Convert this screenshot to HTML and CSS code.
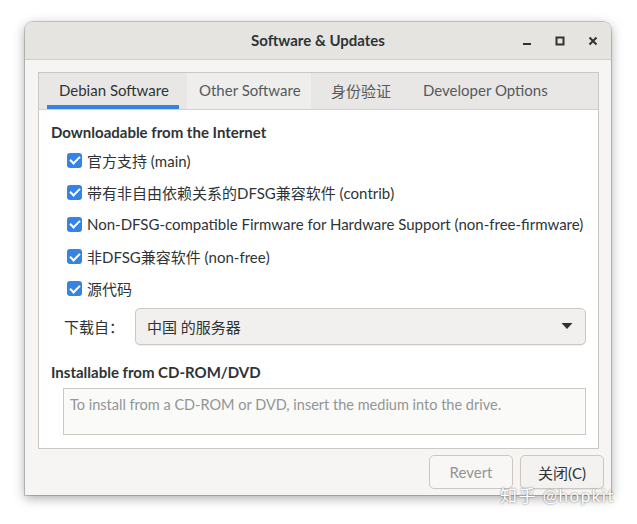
FILE: index.html
```html
<!DOCTYPE html>
<html lang="zh-CN">
<head>
    <meta charset="UTF-8">
    <title>Software &amp; Updates</title>
    <link rel="stylesheet" href="styles.css">
</head>
<body>
    <div class="window">
        <div class="titlebar">
            <span class="title">Software &amp; Updates</span>
            <div class="wm-buttons">
                <span class="wm-btn">
                    <svg width="10" height="10" viewBox="0 0 10 10"><rect x="1" y="7" width="8" height="2" fill="#2e3436"/></svg>
                </span>
                <span class="wm-btn">
                    <svg width="10" height="10" viewBox="0 0 10 10"><rect x="1.5" y="1.5" width="7" height="7" fill="none" stroke="#2e3436" stroke-width="2"/></svg>
                </span>
                <span class="wm-btn">
                    <svg width="10" height="10" viewBox="0 0 10 10"><path d="M1.5 1.5 L8.5 8.5 M8.5 1.5 L1.5 8.5" stroke="#2e3436" stroke-width="2"/></svg>
                </span>
            </div>
        </div>
        <div class="content">
            <div class="notebook">
                <div class="tabs">
                    <span class="tab active">Debian Software</span>
                    <span class="tab hover">Other Software</span>
                    <span class="tab">身份验证</span>
                    <span class="tab">Developer Options</span>
                </div>
                <div class="page">
                    <div class="heading">Downloadable from the Internet</div>
                    <div class="checks">
                        <div class="check"><span class="box"></span>官方支持 (main)</div>
                        <div class="check"><span class="box"></span>带有非自由依赖关系的DFSG兼容软件 (contrib)</div>
                        <div class="check"><span class="box"></span>Non-DFSG-compatible Firmware for Hardware Support (non-free-firmware)</div>
                        <div class="check"><span class="box"></span>非DFSG兼容软件 (non-free)</div>
                        <div class="check"><span class="box"></span>源代码</div>
                    </div>
                    <div class="source-row">
                        <span class="source-label">下载自：</span>
                        <div class="combo">
                            <span>中国 的服务器</span>
                            <svg width="12" height="8" viewBox="0 0 12 8"><path d="M0.5 1 L11.5 1 L6 7 Z" fill="#2e3436"/></svg>
                        </div>
                    </div>
                    <div class="heading cd">Installable from CD-ROM/DVD</div>
                    <div class="cd-box">To install from a CD-ROM or DVD, insert the medium into the drive.</div>
                </div>
            </div>
            <div class="actions">
                <button class="btn" disabled>Revert</button>
                <button class="btn">关闭(C)</button>
            </div>
        </div>
    </div>
    <div class="watermark">知乎 @hopkit</div>
</body>
</html>
```

FILE: styles.css
```css
body {
    margin: 0;
    background-color: #ffffff;
    font-family: 'Lato', 'Noto Sans CJK SC', sans-serif;
    font-size: 15px;
    color: #2e3436;
    width: 637px;
    height: 524px;
    overflow: hidden;
    position: relative;
}
.window {
    position: absolute;
    left: 25px;
    top: 22px;
    width: 586px;
    height: 473px;
    border-radius: 8px 8px 0 0;
    box-shadow: 0 3px 12px rgba(0, 0, 0, 0.35), 0 0 0 1px rgba(0, 0, 0, 0.18);
    display: flex;
    flex-direction: column;
    overflow: hidden;
    background-color: #f6f5f4;
}
.titlebar {
    height: 37px;
    flex: none;
    background-color: #e6e4e1;
    border-bottom: 1px solid #d1cdc8;
    display: flex;
    align-items: center;
    justify-content: center;
    position: relative;
}
.title {
    font-weight: bold;
    color: #2e3436;
    margin-bottom: 2px;
}
.wm-buttons {
    position: absolute;
    right: 8px;
    top: 0;
    height: 37px;
    display: flex;
    align-items: center;
    gap: 13px;
}
.wm-btn {
    width: 20px;
    height: 20px;
    display: flex;
    align-items: center;
    justify-content: center;
}
.content {
    flex: 1;
    padding: 12px 12px 6px 13px;
    display: flex;
    flex-direction: column;
}
.notebook {
    border: 1px solid #cdc7c2;
    background-color: #ffffff;
    height: 375px;
    display: flex;
    flex-direction: column;
}
.tabs {
    height: 36px;
    background-color: #e8e7e6;
    border-bottom: 1px solid #d5d0cc;
    display: flex;
    padding-left: 8px;
    gap: 8px;
}
.tab {
    padding: 0 12px;
    display: flex;
    align-items: center;
    color: #555a5c;
    white-space: nowrap;
    border-bottom: 4px solid transparent;
    padding-top: 2px;
    box-sizing: border-box;
}
.tab.active {
    color: #2e3436;
    border-bottom-color: #3584e4;
    width: 132px;
}
.tab.hover {
    background-color: #eeeeec;
    width: 124px;
}
.page {
    padding: 12px 12px 0 12px;
    display: flex;
    flex-direction: column;
}
.heading {
    font-weight: bold;
    line-height: 20px;
}
.checks {
    padding-left: 16px;
    margin-top: 2px;
}
.check {
    display: flex;
    align-items: center;
    height: 32.2px;
    white-space: nowrap;
}
.box {
    width: 15px;
    height: 15px;
    border-radius: 3px;
    background-color: #3584e4;
    margin-right: 5px;
    position: relative;
    flex: none;
}
.box::after {
    content: '';
    position: absolute;
    left: 4.5px;
    top: 1.5px;
    width: 4px;
    height: 8px;
    border: solid #ffffff;
    border-width: 0 2.2px 2.2px 0;
    transform: rotate(45deg);
}
.source-row {
    display: flex;
    align-items: center;
    margin-top: 3px;
    padding-left: 13px;
}
.source-label {
    width: 71px;
}
.combo {
    flex: 1;
    height: 37px;
    box-sizing: border-box;
    border: 1px solid #cdc7c2;
    border-radius: 5px;
    background-color: #f1f0ef;
    display: flex;
    align-items: center;
    justify-content: space-between;
    padding: 0 12px 0 11px;
    box-shadow: 0 1px 1px rgba(0, 0, 0, 0.07);
}
.heading.cd {
    margin-top: 17px;
}
.cd-box {
    margin: 6px 0 0 12px;
    height: 47px;
    border: 1px solid #cdc7c2;
    background-color: #fafaf9;
    color: #929595;
    padding: 7px 6px 0 6px;
    box-sizing: border-box;
    font-size: 14.5px;
}
.actions {
    display: flex;
    justify-content: flex-end;
    gap: 7px;
    margin-top: 6px;
    margin-right: -5px;
}
.btn {
    width: 84px;
    height: 34px;
    font-family: inherit;
    font-size: 15px;
    color: #2e3436;
    background-color: #f3f2f1;
    border: 1px solid #cdc7c2;
    border-radius: 5px;
    box-shadow: 0 1px 1px rgba(0, 0, 0, 0.07);
}
.btn:disabled {
    color: #929595;
    background-color: #f8f7f6;
    box-shadow: none;
}
.watermark {
    position: absolute;
    left: 500px;
    top: 482px;
    color: #ffffff;
    font-size: 17px;
    text-shadow: 0 0 2px rgba(0, 0, 0, 0.6);
    letter-spacing: 1.5px;
}
```
